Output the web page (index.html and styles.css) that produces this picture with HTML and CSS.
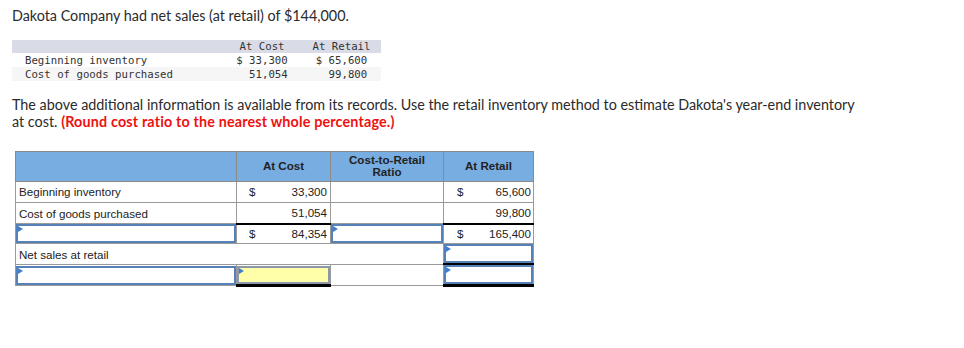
FILE: index.html
```html
<!DOCTYPE html>
<html>
<head>
<meta charset="utf-8">
<link rel="stylesheet" href="styles.css">
</head>
<body>
<div class="page">
  <p class="intro">Dakota Company had net sales (at retail) of $144,000.</p>

  <table class="given">
    <colgroup><col class="g1"><col class="g2"><col class="g3"></colgroup>
    <tr class="ghead"><td></td><td class="c">At Cost</td><td class="c r3">At Retail</td></tr>
    <tr><td class="glabel">Beginning inventory</td><td class="c">$ 33,300</td><td class="c r3">$ 65,600</td></tr>
    <tr class="alt"><td class="glabel">Cost of goods purchased</td><td class="c">  51,054</td><td class="c r3">  99,800</td></tr>
  </table>

  <p class="desc"><span class="line">The above additional information is available from its records. Use the retail inventory method to estimate Dakota's year-end inventory</span><span class="line">at cost. <span class="warn">(Round cost ratio to the nearest whole percentage.)</span></span></p>

  <table class="work">
    <colgroup><col class="w1"><col class="w2"><col class="w3"><col class="w4"></colgroup>
    <tr class="head">
      <th></th>
      <th>At Cost</th>
      <th>Cost-to-Retail<br>Ratio</th>
      <th>At Retail</th>
    </tr>
    <tr class="row">
      <td class="label">Beginning inventory</td>
      <td class="money"><span class="cur">$</span><span class="num">33,300</span></td>
      <td></td>
      <td class="money retail"><span class="cur">$</span><span class="num">65,600</span></td>
    </tr>
    <tr class="row">
      <td class="label">Cost of goods purchased</td>
      <td class="money"><span class="cur"></span><span class="num">51,054</span></td>
      <td></td>
      <td class="money retail"><span class="cur"></span><span class="num">99,800</span></td>
    </tr>
    <tr class="row short">
      <td class="slot"><div class="inp"></div></td>
      <td class="money sum"><span class="cur">$</span><span class="num">84,354</span></td>
      <td class="slot"><div class="inp"></div></td>
      <td class="money retail sum"><span class="cur">$</span><span class="num">165,400</span></td>
    </tr>
    <tr class="row short">
      <td class="label" colspan="3">Net sales at retail</td>
      <td class="slot under1"><div class="inp"></div></td>
    </tr>
    <tr class="row short last">
      <td class="slot"><div class="inp"></div></td>
      <td class="slot under2"><div class="inp yellow"></div></td>
      <td></td>
      <td class="slot under2"><div class="inp"></div></td>
    </tr>
  </table>
</div>
</body>
</html>
```
FILE: styles.css
```css
html, body {
  margin: 0;
  padding: 0;
  background: #ffffff;
}

.page {
  padding: 7px 0 0 12px;
  font-family: "Lato", "Open Sans", sans-serif;
  color: #2b2b2b;
}

.intro {
  margin: 0;
  font-size: 14.35px;
  line-height: 18px;
}

.given {
  margin-top: 15px;
  border-collapse: collapse;
  table-layout: fixed;
  width: 369px;
  font-family: "DejaVu Sans Mono", monospace;
  font-size: 10.7px;
  color: #333;
}

.given col.g1 { width: 217px; }
.given col.g2 { width: 66px; }
.given col.g3 { width: 86px; }

.given td {
  padding: 0;
  height: 14px;
  line-height: 13px;
  white-space: pre;
  vertical-align: bottom;
}

.given .ghead td {
  background: #d9dce6;
  height: 13px;
  vertical-align: middle;
}

.given .alt td { background: #f6f6f6; }

.given .glabel { padding-left: 13px; }
.given .c { text-align: center; }
.given .r3 { padding-left: 7px; }

.desc {
  margin: 15px 0 0 0;
  font-size: 14.35px;
  line-height: 17.4px;
}

.desc .line {
  display: block;
  white-space: nowrap;
}

.warn {
  color: #ee1111;
  font-weight: bold;
  letter-spacing: 0.16px;
}

.work {
  margin: 20px 0 0 3px;
  border-collapse: collapse;
  table-layout: fixed;
  width: 518px;
  font-family: "Liberation Sans", Arial, sans-serif;
  font-size: 11.6px;
  color: #222;
}

.work col.w1 { width: 221px; }
.work col.w2 { width: 94px; }
.work col.w3 { width: 113px; }
.work col.w4 { width: 90px; }

.work th {
  background: #78ade2;
  border: 1px solid #8a8a8a;
  height: 29px;
  padding: 0;
  font-weight: bold;
  line-height: 12px;
  text-align: center;
  vertical-align: middle;
}

.work td {
  border: 1px solid #9a9a9a;
  height: 20px;
  padding: 0;
  vertical-align: middle;
}

.work .short td {
  height: 18px;
}

.work .last td {
  height: 17px;
}

.work .label {
  padding-left: 3px;
}

.money .cur,
.money .num {
  display: inline-block;
  line-height: 18px;
}

.work td.money {
  padding: 0 3px 0 12px;
  white-space: nowrap;
}

.work td.money .cur { width: 14px; }
.work td.money .num { float: right; }

.work td.retail { padding: 0 2px 0 13px; }

.work td.sum { border-top: 2px solid #000; }

.work td.slot {
  padding: 0;
}

.inp {
  position: relative;
  box-sizing: border-box;
  height: 19px;
  border: 2px solid #5580b8;
  background: #ffffff;
}

.inp::before {
  content: "";
  position: absolute;
  left: 0;
  top: 0;
  border-top: 3px solid transparent;
  border-bottom: 3px solid transparent;
  border-left: 5px solid #3f7fd0;
}

.inp.yellow {
  background: #ffffaa;
  border-color: #8d98a8;
  height: 18px;
}

.work td.under1 { border-bottom: 2px solid #000; }
.work td.under2 { border-bottom: 3px solid #000; }
```
